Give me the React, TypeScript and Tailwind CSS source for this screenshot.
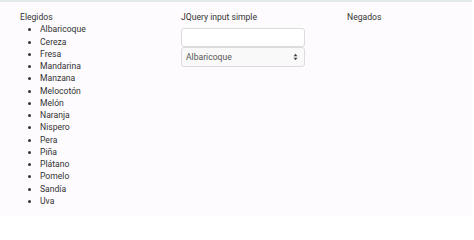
const FRUITS = [
  "Albaricoque",
  "Cereza",
  "Fresa",
  "Mandarina",
  "Manzana",
  "Melocotón",
  "Melón",
  "Naranja",
  "Nispero",
  "Pera",
  "Piña",
  "Plátano",
  "Pomelo",
  "Sandía",
  "Uva",
];

export default function App() {
  return (
    <div className="w-[474px] h-[236px] bg-white font-['Roboto','Liberation_Sans',sans-serif] text-[8.6px] leading-[12.25px] text-[#333]">
      <div className="w-[472px] h-[216px] bg-[#fdfbfd] border-t-2 border-[#e4eaea] flex pl-5 pt-[9px]">
        {/* Elegidos */}
        <div className="w-[161px]">
          <div>Elegidos</div>
          <ul className="list-disc pl-5">
            {FRUITS.map((f) => (
              <li key={f}>{f}</li>
            ))}
          </ul>
        </div>

        {/* JQuery input */}
        <div className="w-[166px]">
          <div>JQuery input simple</div>
          <div className="w-[124px] mt-[5px]">
            <input
              type="text"
              className="block w-full h-[19px] bg-white border border-[#dcdcdc] rounded-[3px]"
            />
            <div className="h-[20px] flex items-center justify-between bg-[#f9f9f9] border border-[#dcdcdc] rounded-[3px] pl-1 pr-[6px] text-[#555]">
              <span>Albaricoque</span>
              <svg width="5" height="8" viewBox="0 0 5 8">
                <path d="M0.5 3.2 L2.5 0.8 L4.5 3.2 Z M0.5 4.8 L2.5 7.2 L4.5 4.8 Z" fill="#444" />
              </svg>
            </div>
          </div>
        </div>

        {/* Negados */}
        <div>
          <div>Negados</div>
        </div>
      </div>
    </div>
  );
}
